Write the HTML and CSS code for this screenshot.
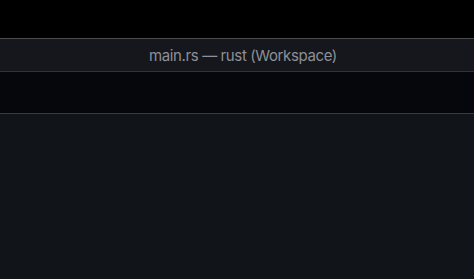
FILE: index.html
```html
<!DOCTYPE html>
<html>
<head>
<meta charset="utf-8">
<link rel="stylesheet" href="styles.css">
</head>
<body>
<div class="top"></div>
<div class="titlebar"><span class="title">main.rs — rust (Workspace)</span></div>
<div class="toolbar"></div>
<div class="editor"></div>
</body>
</html>
```
FILE: styles.css
```css
html, body {
  margin: 0;
  padding: 0;
  height: 100%;
  background: #111419;
  font-family: Inter, "Liberation Sans", sans-serif;
}
body {
  display: flex;
  flex-direction: column;
}
.top {
  height: 38px;
  background: #000000;
  flex: none;
}
.titlebar {
  height: 32px;
  flex: none;
  border-top: 1px solid #4a4b4f;
  border-bottom: 1px solid #30333a;
  background: #15171d;
  display: flex;
  align-items: center;
  justify-content: center;
  padding-left: 12px;
}
.title {
  color: #8d9097;
  font-size: 15px;
  letter-spacing: -0.38px;
}
.toolbar {
  height: 41px;
  flex: none;
  background: #05070c;
  border-bottom: 1px solid #3a3b3f;
}
.editor {
  flex: 1;
  background: #111419;
}
```
